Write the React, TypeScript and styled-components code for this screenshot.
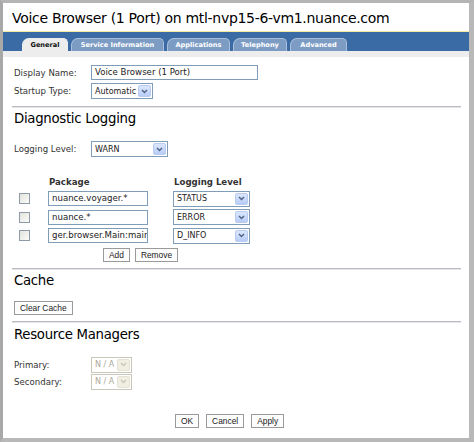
import React from "react";
import styled, { createGlobalStyle } from "styled-components";

const Global = createGlobalStyle`
  html, body { margin: 0; padding: 0; background: #fff; }
  * { box-sizing: border-box; }
`;

const Frame = styled.div`
  width: 474px;
  height: 442px;
  border-top: 3px solid #b4b4b4;
  border-left: 3px solid #a8a8a8;
  border-right: 5px solid #b8b8b8;
  border-bottom: 4px solid #b8b8b8;
  display: flex;
  flex-direction: column;
  font-family: "DejaVu Sans", Verdana, sans-serif;
  color: #333;
  background: #fff;
`;

const Title = styled.div`
  height: 28px;
  padding: 7px 0 0 9px;
  font-size: 14px;
  letter-spacing: -0.3px;
  color: #000;
  white-space: nowrap;
`;

const TabBand = styled.div`
  height: 20px;
  background: #3b6ba5;
  border-top: 1px solid #f4e9a0;
  display: flex;
  align-items: flex-end;
  gap: 3px;
  padding-left: 19px;
`;

const Tab = styled.div<{ $active?: boolean; $w: number }>`
  width: ${(p) => p.$w}px;
  height: 13px;
  border-radius: 7px 5px 0 0;
  background: ${(p) => (p.$active ? "#ededed" : "#7d9cc4")};
  border: 1px solid ${(p) => (p.$active ? "#ededed" : "#a9bfdb")};
  border-bottom: none;
  color: ${(p) => (p.$active ? "#111" : "#fff")};
  font-size: 6.6px;
  font-weight: bold;
  line-height: 12px;
  text-align: center;
  white-space: nowrap;
`;

const TabStrip = styled.div`
  height: 6px;
  background: #ededed;
`;

const Content = styled.div`
  flex: 1;
  display: flex;
  flex-direction: column;
  padding: 8px 8px 0 9px;
`;

const FormRow = styled.div<{ $gap?: number }>`
  display: flex;
  align-items: center;
  margin-top: ${(p) => p.$gap ?? 0}px;
  padding-left: 2px;
`;

const Label = styled.div`
  width: 77px;
  font-size: 8.6px;
  color: #333;
`;

const TextBox = styled.div<{ $w: number }>`
  width: ${(p) => p.$w}px;
  height: 15px;
  border: 1px solid #7f9db9;
  background: #fff;
  font-size: 8.6px;
  line-height: 13px;
  padding-left: 3px;
  color: #222;
  white-space: nowrap;
  overflow: hidden;
`;

const SelectBox = styled.div<{ $w: number; $disabled?: boolean }>`
  width: ${(p) => p.$w}px;
  height: 16px;
  border: 1px solid ${(p) => (p.$disabled ? "#c9c7ba" : "#7f9db9")};
  background: #fff;
  display: flex;
  align-items: center;
  gap: 1px;
  padding: 0 1px 0 3px;
  font-size: 8px;
  color: ${(p) => (p.$disabled ? "#aca899" : "#222")};
  white-space: nowrap;
`;

const SelectText = styled.span`
  flex: 1;
`;

const Arrow = styled.div<{ $disabled?: boolean }>`
  flex: none;
  width: 13px;
  height: 12px;
  border-radius: 2px;
  background: ${(p) =>
    p.$disabled ? "#f1efe2" : "linear-gradient(#dce7fd, #b7ccf7)"};
  border: 1px solid ${(p) => (p.$disabled ? "#e4e2d6" : "#b9cbef")};
  display: flex;
  align-items: center;
  justify-content: center;
`;

const Select = ({ w, value, disabled }: { w: number; value: string; disabled?: boolean }) => (
  <SelectBox $w={w} $disabled={disabled}>
    <SelectText>{value}</SelectText>
    <Arrow $disabled={disabled}>
      <svg width="7" height="5" viewBox="0 0 7 5">
        <path
          d="M1 1 L3.5 3.5 L6 1"
          fill="none"
          stroke={disabled ? "#c9c7ba" : "#4d6185"}
          strokeWidth="1.4"
        />
      </svg>
    </Arrow>
  </SelectBox>
);

const Rule = styled.div<{ $top: number }>`
  height: 2px;
  background: #b9bcc2;
  border-bottom: 1px solid #e2e4e8;
  margin-top: ${(p) => p.$top}px;
`;

const Heading = styled.div<{ $top: number }>`
  margin-top: ${(p) => p.$top}px;
  padding-left: 2px;
  font-size: 13.3px;
  letter-spacing: -0.3px;
  color: #000;
  line-height: 18px;
`;

const Grid = styled.div`
  display: grid;
  grid-template-columns: 29px 125px 78px;
  row-gap: 2.5px;
  margin-top: 20px;
  padding-left: 7px;
  align-items: center;
`;

const ColHead = styled.div`
  font-size: 8.6px;
  font-weight: bold;
  line-height: 11px;
  color: #333;
  padding-left: 1px;
`;

const Check = styled.div`
  width: 11px;
  height: 11px;
  border: 1px solid #8e9aa8;
  background: linear-gradient(135deg, #e3e3dc, #fbfbf9);
`;

const Btn = styled.div`
  height: 14px;
  padding: 0 5px;
  border: 1px solid #9a9a9a;
  background: #fdfdfd;
  font-family: "Liberation Sans", Arial, sans-serif;
  font-size: 8.4px;
  line-height: 12px;
  color: #222;
  white-space: nowrap;
`;

const BtnRow = styled.div<{ $top: number; $left: number; $gap: number }>`
  display: flex;
  gap: ${(p) => p.$gap}px;
  margin-top: ${(p) => p.$top}px;
  padding-left: ${(p) => p.$left}px;
`;

const tabs = [
  { label: "General", w: 46 },
  { label: "Service Information", w: 93 },
  { label: "Applications", w: 63 },
  { label: "Telephony", w: 54 },
  { label: "Advanced", w: 57 },
];

const packages = [
  { name: "nuance.voyager.*", level: "STATUS" },
  { name: "nuance.*", level: "ERROR" },
  { name: "ger.browser.Main:main", level: "D_INFO" },
];

export default function App() {
  return (
    <Frame>
      <Global />
      <Title>Voice Browser (1 Port) on mtl-nvp15-6-vm1.nuance.com</Title>
      <TabBand>
        {tabs.map((t, i) => (
          <Tab key={t.label} $w={t.w} $active={i === 0}>
            {t.label}
          </Tab>
        ))}
      </TabBand>
      <TabStrip />
      <Content>
        <FormRow $gap={0}>
          <Label>Display Name:</Label>
          <TextBox $w={167}>Voice Browser (1 Port)</TextBox>
        </FormRow>
        <FormRow $gap={3}>
          <Label>Startup Type:</Label>
          <Select w={62} value="Automatic" />
        </FormRow>
        <Rule $top={7} />
        <Heading $top={2}>Diagnostic Logging</Heading>
        <FormRow $gap={13}>
          <Label>Logging Level:</Label>
          <Select w={77} value="WARN" />
        </FormRow>
        <Grid>
          <div />
          <ColHead>Package</ColHead>
          <ColHead>Logging Level</ColHead>
          {packages.map((p) => (
            <React.Fragment key={p.name}>
              <Check />
              <TextBox $w={100}>{p.name}</TextBox>
              <Select w={77} value={p.level} />
            </React.Fragment>
          ))}
        </Grid>
        <BtnRow $top={4} $left={91} $gap={5}>
          <Btn>Add</Btn>
          <Btn>Remove</Btn>
        </BtnRow>
        <Rule $top={6} />
        <Heading $top={2}>Cache</Heading>
        <BtnRow $top={11} $left={2} $gap={0}>
          <Btn>Clear Cache</Btn>
        </BtnRow>
        <Rule $top={6} />
        <Heading $top={3}>Resource Managers</Heading>
        <FormRow $gap={13}>
          <Label>Primary:</Label>
          <Select w={41} value="N / A" disabled />
        </FormRow>
        <FormRow $gap={1}>
          <Label>Secondary:</Label>
          <Select w={41} value="N / A" disabled />
        </FormRow>
        <BtnRow $top={24} $left={163} $gap={7}>
          <Btn>OK</Btn>
          <Btn>Cancel</Btn>
          <Btn>Apply</Btn>
        </BtnRow>
      </Content>
    </Frame>
  );
}
